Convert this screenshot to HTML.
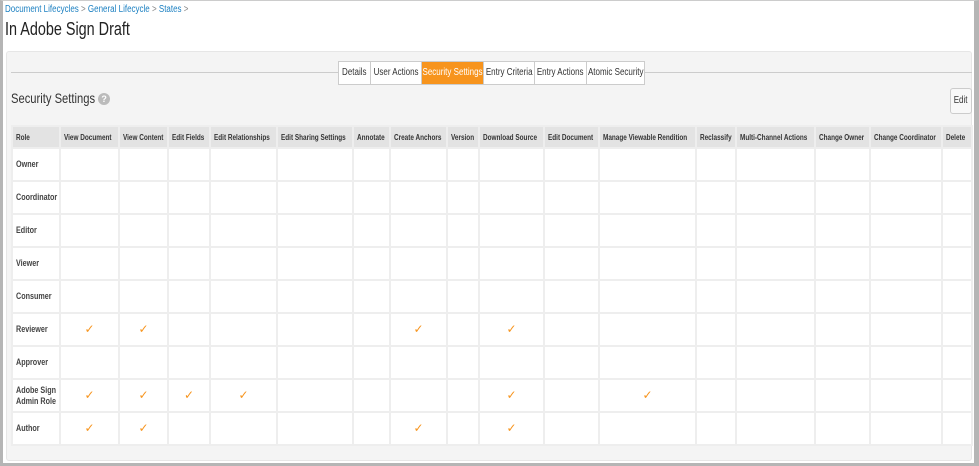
<!DOCTYPE html>
<html><head><meta charset="utf-8"><style>
*{box-sizing:border-box;margin:0;padding:0}
body{width:979px;height:466px;overflow:hidden;background:#fff;font-family:"Liberation Sans",sans-serif;color:#333;position:relative}
.n{display:inline-block;transform:scaleX(0.8);transform-origin:left center;white-space:nowrap}
.frame{position:absolute;left:0;top:0;width:979px;height:466px;border-left:3px solid #b5b5b5;border-top:1px solid #ccc;border-right:5px solid #b5b5b5;border-bottom:3px solid #b5b5b5}
.crumb{position:absolute;left:5px;top:4px;font-size:10px;color:#1a7fc1}
.crumb i{color:#888;font-style:normal}
h1{position:absolute;left:5px;top:19px;font-size:18px;font-weight:normal;color:#222}
.panel{position:absolute;left:6px;top:51px;width:966px;height:410px;background:#f4f4f4;border:1px solid #e6e6e6;border-radius:3px}
.line{position:absolute;left:11px;top:72px;width:961px;height:1px;background:#ccc}
.tabs{position:absolute;left:338px;top:61px;height:24px;display:flex;border:1px solid #ccc;background:#fff}
.tabs div{font-size:10px;line-height:22px;border-right:1px solid #ccc;color:#333;display:flex;justify-content:center}
.tabs div .n{transform-origin:center}
.tabs div:last-child{border-right:none}
.tabs .on{background:#f7941d;color:#fff}
.ss{position:absolute;left:11px;top:90px;font-size:14px;color:#333}
.q{display:inline-block;width:12px;height:12px;border-radius:50%;background:#bbb;color:#fff;font-size:9px;text-align:center;line-height:12px;font-weight:bold;vertical-align:1px}
.edit{position:absolute;left:950px;top:88px;width:22px;height:26px;border:1px solid #ccc;border-radius:3px;background:#f8f8f8;font-size:10px;line-height:24px;display:flex;justify-content:center}
.edit .n{transform-origin:center}
table{position:absolute;left:11px;top:125px;border-collapse:separate;border-spacing:2px;table-layout:fixed;width:962px;background:#eee}
th{background:#e3e3e3;font-size:8px;font-weight:bold;text-align:left;padding:0 3px;height:20px;color:#333;overflow:hidden}
td{background:#fff;height:31px;font-size:9px;font-weight:bold;color:#444;padding:0 3px;text-align:center;line-height:11px}
td:first-child{text-align:left}
.c{color:#f7941d;font-weight:normal;font-size:12px}
</style></head><body>
<div class="crumb"><span class="n">Document Lifecycles <i>&gt;</i> General Lifecycle <i>&gt;</i> States <i>&gt;</i></span></div>
<h1><span class="n">In Adobe Sign Draft</span></h1>
<div class="panel"></div>
<div class="line"></div>
<div class="tabs"><div style="width:32px"><span class="n">Details</span></div><div style="width:51px"><span class="n">User Actions</span></div><div class="on" style="width:62px"><span class="n">Security Settings</span></div><div style="width:51px"><span class="n">Entry Criteria</span></div><div style="width:52px"><span class="n">Entry Actions</span></div><div style="width:57px"><span class="n">Atomic Security</span></div></div>
<div class="ss"><span class="n">Security Settings</span><span class="q" style="margin-left:-18px">?</span></div>
<div class="edit"><span class="n">Edit</span></div>
<table>
<colgroup><col style="width:46px"><col style="width:57px"><col style="width:47px"><col style="width:40px"><col style="width:65px"><col style="width:74px"><col style="width:35px"><col style="width:55px"><col style="width:30px"><col style="width:63px"><col style="width:53px"><col style="width:95px"><col style="width:38px"><col style="width:77px"><col style="width:53px"><col style="width:70px"><col style="width:28px"></colgroup>
<tr><th><span class="n">Role</span></th><th><span class="n">View Document</span></th><th><span class="n">View Content</span></th><th><span class="n">Edit Fields</span></th><th><span class="n">Edit Relationships</span></th><th><span class="n">Edit Sharing Settings</span></th><th><span class="n">Annotate</span></th><th><span class="n">Create Anchors</span></th><th><span class="n">Version</span></th><th><span class="n">Download Source</span></th><th><span class="n">Edit Document</span></th><th><span class="n">Manage Viewable Rendition</span></th><th><span class="n">Reclassify</span></th><th><span class="n">Multi-Channel Actions</span></th><th><span class="n">Change Owner</span></th><th><span class="n">Change Coordinator</span></th><th><span class="n">Delete</span></th></tr>
<tr><td><span class="n">Owner</span></td><td></td><td></td><td></td><td></td><td></td><td></td><td></td><td></td><td></td><td></td><td></td><td></td><td></td><td></td><td></td><td></td></tr>
<tr><td><span class="n">Coordinator</span></td><td></td><td></td><td></td><td></td><td></td><td></td><td></td><td></td><td></td><td></td><td></td><td></td><td></td><td></td><td></td><td></td></tr>
<tr><td><span class="n">Editor</span></td><td></td><td></td><td></td><td></td><td></td><td></td><td></td><td></td><td></td><td></td><td></td><td></td><td></td><td></td><td></td><td></td></tr>
<tr><td><span class="n">Viewer</span></td><td></td><td></td><td></td><td></td><td></td><td></td><td></td><td></td><td></td><td></td><td></td><td></td><td></td><td></td><td></td><td></td></tr>
<tr><td><span class="n">Consumer</span></td><td></td><td></td><td></td><td></td><td></td><td></td><td></td><td></td><td></td><td></td><td></td><td></td><td></td><td></td><td></td><td></td></tr>
<tr><td><span class="n">Reviewer</span></td><td class="c">✓</td><td class="c">✓</td><td></td><td></td><td></td><td></td><td class="c">✓</td><td></td><td class="c">✓</td><td></td><td></td><td></td><td></td><td></td><td></td><td></td></tr>
<tr><td><span class="n">Approver</span></td><td></td><td></td><td></td><td></td><td></td><td></td><td></td><td></td><td></td><td></td><td></td><td></td><td></td><td></td><td></td><td></td></tr>
<tr><td><span class="n">Adobe Sign<br>Admin Role</span></td><td class="c">✓</td><td class="c">✓</td><td class="c">✓</td><td class="c">✓</td><td></td><td></td><td></td><td></td><td class="c">✓</td><td></td><td class="c">✓</td><td></td><td></td><td></td><td></td><td></td></tr>
<tr><td><span class="n">Author</span></td><td class="c">✓</td><td class="c">✓</td><td></td><td></td><td></td><td></td><td class="c">✓</td><td></td><td class="c">✓</td><td></td><td></td><td></td><td></td><td></td><td></td><td></td></tr>
</table>
<div class="frame"></div>
</body></html>
